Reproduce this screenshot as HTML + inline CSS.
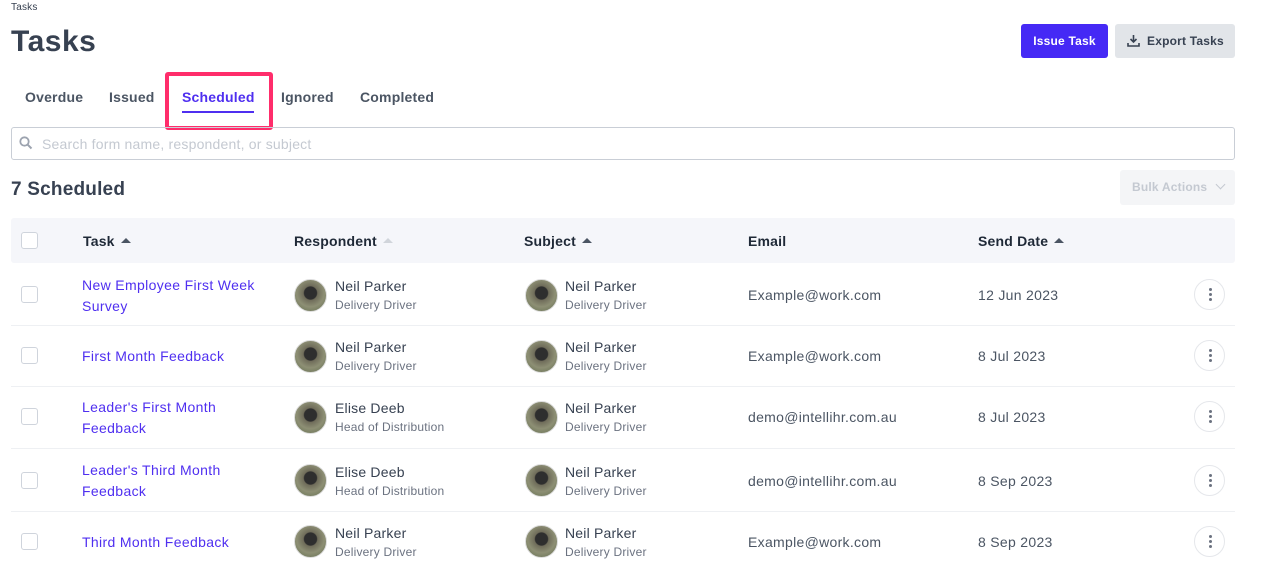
<!DOCTYPE html>
<html><head><meta charset="utf-8"><style>
*{box-sizing:border-box;margin:0;padding:0}
body{width:1264px;height:564px;overflow:hidden;background:#fff;font-family:"Liberation Sans",sans-serif;color:#374151;position:relative;letter-spacing:0.2px}
.a{position:absolute;white-space:nowrap}
.cb{position:absolute;left:21px;width:17px;height:17px;border:1px solid #cfd4dc;border-radius:3px;background:#fff}
.av{position:absolute;width:33px;height:33px;border-radius:50%;background:radial-gradient(circle at 50% 42%,#2e2e2e 0 26%,#6f6c5a 30%,#8d8f74 58%,#5f6b4c 100%);border:1px solid #ddd}
.nm{font-size:14px;color:#374151}
.rl{font-size:12px;color:#6b7280}
.lk{font-size:14px;color:#4f2ff0;line-height:21px;letter-spacing:0.35px}
.tx{font-size:14px;color:#4b5563;letter-spacing:0.3px}
.kb{position:absolute;left:1194px;width:31px;height:31px;border:1px solid #e5e7eb;border-radius:50%}
.kb i{position:absolute;left:14px;width:3px;height:3px;border-radius:50%;background:#6b7280}
.sep{position:absolute;left:11px;width:1224px;height:1px;background:#eef0f3}
.th{font-size:14px;font-weight:bold;color:#1f2937;top:233px}
.up{display:inline-block;width:0;height:0;border-left:5px solid transparent;border-right:5px solid transparent;border-bottom:5px solid #4b5563;margin-left:6px;vertical-align:3px}
</style></head><body>
<div class="a" style="left:11px;top:2px;font-size:10px;color:#374151">Tasks</div>
<div class="a" style="left:11px;top:25px;font-size:30px;font-weight:bold;color:#374151;letter-spacing:0.5px">Tasks</div>
<div class="a" style="left:1021px;top:24px;width:87px;height:34px;background:#4529f5;border-radius:3px;color:#fff;font-size:12px;font-weight:bold;text-align:center;line-height:34px">Issue Task</div>
<div class="a" style="left:1115px;top:24px;width:120px;height:34px;background:#e2e5e9;border-radius:3px;color:#374151;font-size:12px;font-weight:bold;line-height:34px;padding-left:32px">Export Tasks
<svg style="position:absolute;left:12px;top:10px" width="13" height="13" viewBox="0 0 13 13"><path d="M6.5 1v7M3.5 5l3 3 3-3M1 9v3h11V9" stroke="#374151" stroke-width="1.6" fill="none"/></svg></div>
<div class="a" style="left:25px;top:89px;font-size:14px;font-weight:bold;color:#4b5563">Overdue</div>
<div class="a" style="left:109px;top:89px;font-size:14px;font-weight:bold;color:#4b5563">Issued</div>
<div class="a" style="left:182px;top:89px;font-size:14px;font-weight:bold;color:#4f2ff0">Scheduled</div>
<div class="a" style="left:182px;top:111px;width:72px;height:2px;background:#4f2ff0"></div>
<div class="a" style="left:165px;top:72px;width:108px;height:58px;border:4px solid #ff2d6b;border-radius:3px"></div>
<div class="a" style="left:281px;top:89px;font-size:14px;font-weight:bold;color:#4b5563">Ignored</div>
<div class="a" style="left:360px;top:89px;font-size:14px;font-weight:bold;color:#4b5563">Completed</div>
<div class="a" style="left:11px;top:127px;width:1224px;height:33px;border:1px solid #c9ced6;border-radius:3px"></div>
<svg class="a" style="left:19px;top:136px" width="14" height="14" viewBox="0 0 14 14"><circle cx="5.5" cy="5.5" r="4.2" stroke="#9ca3af" stroke-width="1.8" fill="none"/><path d="M8.7 8.7L12.5 12.5" stroke="#9ca3af" stroke-width="2"/></svg>
<div class="a" style="left:42px;top:136px;font-size:14px;color:#c4c9d1">Search form name, respondent, or subject</div>
<div class="a" style="left:11px;top:179px;font-size:19px;font-weight:bold;color:#374151">7 Scheduled</div>
<div class="a" style="left:1120px;top:170px;width:115px;height:35px;background:#f4f5f7;border-radius:3px;color:#c4c9d1;font-size:12px;font-weight:bold;line-height:35px;padding-left:12px">Bulk Actions <span style="display:inline-block;width:7px;height:7px;border-right:1.5px solid #c4c9d1;border-bottom:1.5px solid #c4c9d1;transform:rotate(45deg);margin-left:6px;vertical-align:3px"></span></div>
<div class="a" style="left:11px;top:218px;width:1224px;height:45px;background:#f5f6fa;border-radius:3px"></div>
<div class="cb" style="top:232px"></div>
<div class="a th" style="left:83px">Task<span class="up"></span></div>
<div class="a th" style="left:294px">Respondent<span class="up" style="border-bottom-color:#d1d5db"></span></div>
<div class="a th" style="left:524px">Subject<span class="up"></span></div>
<div class="a th" style="left:748px">Email</div>
<div class="a th" style="left:978px">Send Date<span class="up"></span></div>

<div class="cb" style="top:286px"></div>
<div class="a lk" style="left:82px;top:275px">New Employee First Week<br>Survey</div>
<div class="av" style="left:294px;top:279px"></div><div class="a nm" style="left:335px;top:278px">Neil Parker</div><div class="a rl" style="left:335px;top:298px">Delivery Driver</div>
<div class="av" style="left:525px;top:279px"></div><div class="a nm" style="left:565px;top:278px">Neil Parker</div><div class="a rl" style="left:565px;top:298px">Delivery Driver</div>
<div class="a tx" style="left:748px;top:287px">Example@work.com</div><div class="a tx" style="left:978px;top:287px">12 Jun 2023</div>
<div class="kb" style="top:279px"><i style="top:8px"></i><i style="top:13px"></i><i style="top:18px"></i></div>
<div class="sep" style="top:325px"></div>

<div class="cb" style="top:347px"></div>
<div class="a lk" style="left:82px;top:346px">First Month Feedback</div>
<div class="av" style="left:294px;top:340px"></div><div class="a nm" style="left:335px;top:339px">Neil Parker</div><div class="a rl" style="left:335px;top:359px">Delivery Driver</div>
<div class="av" style="left:525px;top:340px"></div><div class="a nm" style="left:565px;top:339px">Neil Parker</div><div class="a rl" style="left:565px;top:359px">Delivery Driver</div>
<div class="a tx" style="left:748px;top:348px">Example@work.com</div><div class="a tx" style="left:978px;top:348px">8 Jul 2023</div>
<div class="kb" style="top:340px"><i style="top:8px"></i><i style="top:13px"></i><i style="top:18px"></i></div>
<div class="sep" style="top:386px"></div>

<div class="cb" style="top:408px"></div>
<div class="a lk" style="left:82px;top:397px">Leader's First Month<br>Feedback</div>
<div class="av" style="left:294px;top:401px"></div><div class="a nm" style="left:335px;top:400px">Elise Deeb</div><div class="a rl" style="left:335px;top:420px">Head of Distribution</div>
<div class="av" style="left:525px;top:401px"></div><div class="a nm" style="left:565px;top:400px">Neil Parker</div><div class="a rl" style="left:565px;top:420px">Delivery Driver</div>
<div class="a tx" style="left:748px;top:409px">demo@intellihr.com.au</div><div class="a tx" style="left:978px;top:409px">8 Jul 2023</div>
<div class="kb" style="top:401px"><i style="top:8px"></i><i style="top:13px"></i><i style="top:18px"></i></div>
<div class="sep" style="top:448px"></div>

<div class="cb" style="top:472px"></div>
<div class="a lk" style="left:82px;top:460px">Leader's Third Month<br>Feedback</div>
<div class="av" style="left:294px;top:464px"></div><div class="a nm" style="left:335px;top:464px">Elise Deeb</div><div class="a rl" style="left:335px;top:484px">Head of Distribution</div>
<div class="av" style="left:525px;top:464px"></div><div class="a nm" style="left:565px;top:464px">Neil Parker</div><div class="a rl" style="left:565px;top:484px">Delivery Driver</div>
<div class="a tx" style="left:748px;top:473px">demo@intellihr.com.au</div><div class="a tx" style="left:978px;top:473px">8 Sep 2023</div>
<div class="kb" style="top:465px"><i style="top:8px"></i><i style="top:13px"></i><i style="top:18px"></i></div>
<div class="sep" style="top:511px"></div>

<div class="cb" style="top:533px"></div>
<div class="a lk" style="left:82px;top:532px">Third Month Feedback</div>
<div class="av" style="left:294px;top:525px"></div><div class="a nm" style="left:335px;top:525px">Neil Parker</div><div class="a rl" style="left:335px;top:545px">Delivery Driver</div>
<div class="av" style="left:525px;top:525px"></div><div class="a nm" style="left:565px;top:525px">Neil Parker</div><div class="a rl" style="left:565px;top:545px">Delivery Driver</div>
<div class="a tx" style="left:748px;top:534px">Example@work.com</div><div class="a tx" style="left:978px;top:534px">8 Sep 2023</div>
<div class="kb" style="top:526px"><i style="top:8px"></i><i style="top:13px"></i><i style="top:18px"></i></div>
</body></html>
